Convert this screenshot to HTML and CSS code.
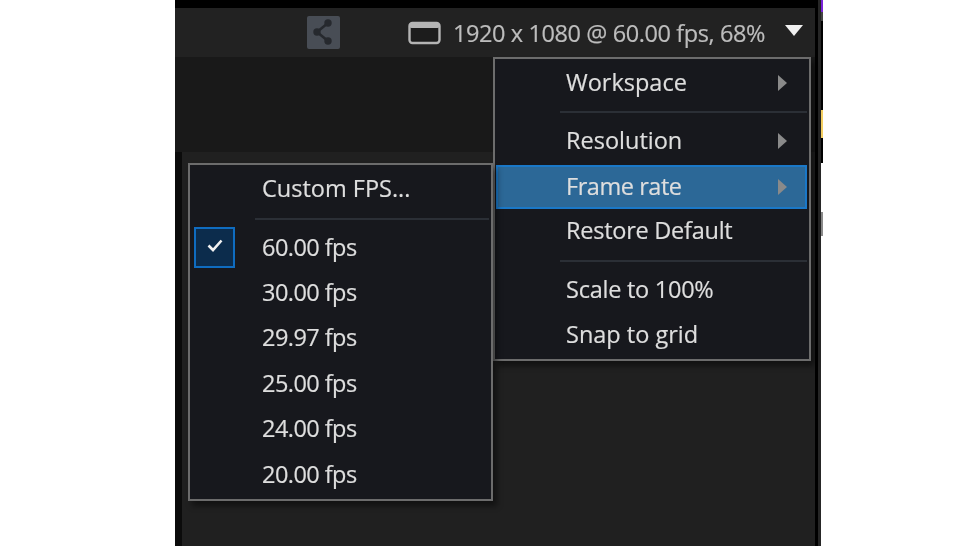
FILE: index.html
```html
<!DOCTYPE html>
<html lang="en">
<head>
<meta charset="utf-8">
<title>Preview settings</title>
<link rel="stylesheet" href="styles.css">
</head>
<body>
<div class="frame">
  <div class="main">
    <div class="topline"></div>
    <div class="toolbar">
      <span class="share">
        <svg width="33" height="33" viewBox="0 0 33 33"><path class="share-line" d="M21 7 10 16l11 9"/><circle class="share-dot" cx="21" cy="7" r="3.7"/><circle class="share-dot" cx="10" cy="16" r="3.7"/><circle class="share-dot" cx="21" cy="25" r="3.7"/></svg>
      </span>
      <svg class="window-icon" width="33" height="24" viewBox="0 0 33 24"><rect class="window-body" x="1.5" y="2" width="30" height="20" rx="3"/><rect class="window-title" x="1.5" y="2" width="30" height="5" rx="2"/></svg>
      <span class="status">1920 x 1080 @ 60.00 fps, 68%</span>
      <svg class="caret" width="18" height="11" viewBox="0 0 18 11"><path class="caret-fill" d="M0 0h18L9 11z"/></svg>
    </div>
    <div class="upper"></div>
    <div class="lower">
      <div class="strip"></div>
      <div class="fill"></div>
    </div>
  </div>
  <div class="edge">
    <div class="edge-dark"></div>
    <div class="edge-mid"></div>
    <div class="edge-side">
      <div class="seg-purple"></div>
      <div class="seg-gray"></div>
      <div class="seg-black-a"></div>
      <div class="seg-yellow"></div>
      <div class="seg-black-b"></div>
      <div class="seg-white-a"></div>
      <div class="seg-gray-b"></div>
      <div class="seg-white-b"></div>
    </div>
  </div>

  <div class="menu menu-main">
    <div class="item"><span class="label">Workspace</span><span class="arrow"></span></div>
    <div class="sep"></div>
    <div class="item"><span class="label">Resolution</span><span class="arrow"></span></div>
    <div class="item active"><span class="label tighter">Frame rate</span><span class="arrow"></span></div>
    <div class="item"><span class="label tight">Restore Default</span></div>
    <div class="sep"></div>
    <div class="item"><span class="label tight">Scale to 100%</span></div>
    <div class="item"><span class="label">Snap to grid</span></div>
  </div>

  <div class="menu menu-fps">
    <div class="item"><span class="label">Custom FPS...</span></div>
    <div class="sep"></div>
    <div class="item">
      <span class="check"><svg width="16" height="14" viewBox="0 0 16 14"><path class="check-mark" d="M1.5 7.5 6 12 14.5 2.5"/></svg></span>
      <span class="label num">60.00 fps</span>
    </div>
    <div class="item"><span class="label num">30.00 fps</span></div>
    <div class="item"><span class="label num">29.97 fps</span></div>
    <div class="item"><span class="label num">25.00 fps</span></div>
    <div class="item"><span class="label num">24.00 fps</span></div>
    <div class="item"><span class="label num">20.00 fps</span></div>
  </div>
</div>
</body>
</html>
```
FILE: styles.css
```css
* { box-sizing: border-box; }
html, body { margin: 0; height: 100%; background: #fff; overflow: hidden; }
.frame {
  position: relative;
  display: flex;
  width: 648px;
  height: 546px;
  margin-left: 175px;
  font-family: "Open Sans", "Noto Sans", sans-serif;
  font-stretch: 90%;
  font-size: 23.5px;
  color: #dedede;
  -webkit-text-stroke: 0.2px #dedede;
  filter: blur(0.55px);
}
.main { display: flex; flex-direction: column; width: 640px; height: 546px; }
.topline { height: 8px; background: #000; }
.toolbar {
  display: flex;
  align-items: center;
  height: 49px;
  padding-left: 132px;
  background: #222;
}
.share {
  display: flex;
  width: 33px;
  height: 33px;
  border-radius: 2px;
  background: #484d55;
}
.share-line { fill: none; stroke: #26292e; stroke-width: 2.6; }
.share-dot { fill: #26292e; }
.window-icon { margin-left: 68px; }
.window-body { fill: #1c1c1c; stroke: #b4b4b4; stroke-width: 2.4; }
.window-title { fill: #b4b4b4; }
.status {
  margin-left: 12px;
  width: 332px;
  white-space: nowrap;
  letter-spacing: -0.4px;
  color: #bdbdbd;
  -webkit-text-stroke: 0.2px #bdbdbd;
}
.caret { margin-top: -5px; }
.caret-fill { fill: #f0f0f0; }
.upper { height: 95px; background: #191919; }
.lower { display: flex; flex: 1; background: #202020; }
.strip { width: 7px; background: #0b0b0b; }
.fill { flex: 1; }
.edge { display: flex; width: 8px; height: 546px; }
.edge-dark { width: 3px; background: #000; }
.edge-mid { width: 3px; background: #262626; }
.edge-side { width: 2px; display: flex; flex-direction: column; }
.seg-purple { height: 12px; background: #7a22d8; }
.seg-gray { height: 9px; background: #444; }
.seg-black-a { height: 89px; background: #000; }
.seg-yellow { height: 28px; background: #f4cf62; }
.seg-black-b { height: 25px; background: #000; }
.seg-white-a { height: 49px; background: #fff; }
.seg-gray-b { height: 24px; background: #8a8a8a; }
.seg-white-b { flex: 1; background: #fff; }

.menu {
  position: absolute;
  border: 2px solid #6c6c6c;
  background: #17181d;
  box-shadow: 4px 5px 6px rgba(0, 0, 0, 0.45);
  padding-top: 1px;
}
.menu-main { left: 318px; top: 57px; width: 318px; height: 304px; }
.menu-fps { left: 13px; top: 163px; width: 305px; height: 338px; }
.item {
  position: relative;
  display: flex;
  align-items: center;
  height: 45.4px;
  margin: 0 1px;
}
.menu-main .item { padding-left: 70px; }
.menu-fps .item { padding-left: 71px; }
.menu-fps .item:first-child { height: 46.5px; }
.menu-fps .sep { height: 12.5px; }
.label { white-space: nowrap; margin-top: -2px; }
.label.tight { letter-spacing: -0.25px; }
.label.tighter { letter-spacing: -0.45px; }
.label.num { letter-spacing: -0.55px; }
.arrow {
  position: absolute;
  right: 21px;
  top: 50%;
  margin-top: -8px;
  border-left: 9px solid #8a8a8a;
  border-top: 8px solid transparent;
  border-bottom: 8px solid transparent;
}
.item.active {
  background: #2c6897;
  border: 2px solid #1a78c8;
  margin-top: 1px;
  height: 44px;
  margin-right: 2px;
}
.menu-main .item.active { padding-left: 68px; }
.item.active .arrow { right: 18px; }
.sep {
  display: flex;
  height: 13px;
  margin-left: 65px;
  margin-right: 2px;
  align-items: center;
}
.sep::before { content: ""; flex: 1; height: 2px; background: #2b2f36; }
.check {
  position: absolute;
  left: 3px;
  top: 2px;
  display: flex;
  align-items: center;
  justify-content: center;
  width: 41px;
  height: 41px;
  border: 2px solid #0f6cc0;
  background: #0c2c4c;
}
.check svg { margin-top: -6px; }
.check-mark { fill: none; stroke: #f2f2f2; stroke-width: 2.6; }
```
